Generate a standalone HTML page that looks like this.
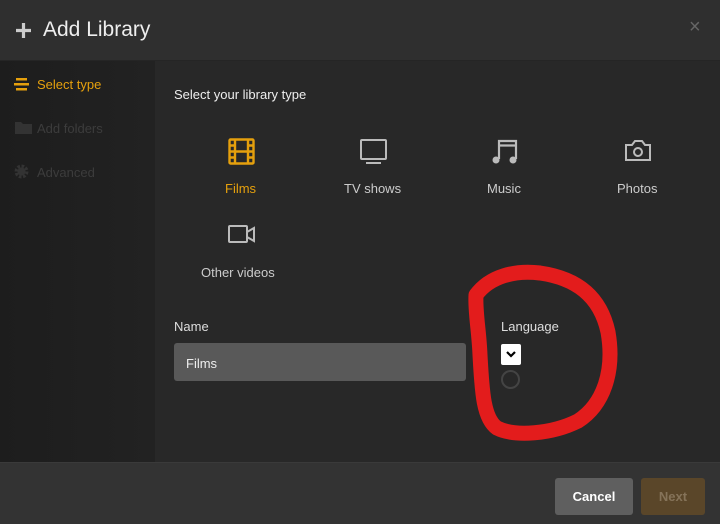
<!DOCTYPE html>
<html><head><style>
*{margin:0;padding:0;box-sizing:border-box}
body{width:720px;height:524px;background:#282828;font-family:"Liberation Sans",sans-serif;position:relative;overflow:hidden;color:#ddd}
.hdr{position:absolute;left:0;top:0;width:720px;height:61px;background:#2f2f2f;border-bottom:1px solid #252525}
.side{position:absolute;left:0;top:61px;width:155px;height:401px;background:linear-gradient(90deg,#1d1d1d,#222)}
.foot{position:absolute;left:0;top:462px;width:720px;height:62px;background:#333;border-top:1px solid #3a3a3a}
.t{position:absolute;white-space:nowrap}
.ic{position:absolute}
</style></head><body>
<div class="hdr"></div>
<div class="side"></div>
<div class="foot"></div>
<svg class="ic" style="left:15px;top:22px" width="17" height="17"><path d="M8.5 1v15M1 8.5h15" stroke="#ccc" stroke-width="3.2"/></svg>
<div class="t" style="left:43px;top:18px;font-size:21px;color:#eee">Add Library</div>
<div class="t" style="left:689px;top:16px;font-size:20px;color:#666">×</div>

<svg class="ic" style="left:14px;top:78px" width="16" height="14"><g fill="#e5a00d"><rect x="2" y="0" width="11" height="2.5"/><rect x="0" y="5" width="15" height="2.5"/><rect x="2" y="10" width="11" height="2.5"/></g></svg>
<div class="t" style="left:37px;top:77px;font-size:13px;color:#e5a00d">Select type</div>
<svg class="ic" style="left:15px;top:121px" width="17" height="13"><path d="M0 1h6l2 2h9v10H0z" fill="#333"/></svg>
<div class="t" style="left:37px;top:121px;font-size:13px;color:#3c3c3c">Add folders</div>
<svg class="ic" style="left:14px;top:164px" width="15" height="15"><circle cx="7.5" cy="7.5" r="5" fill="none" stroke="#333" stroke-width="4" stroke-dasharray="2.5 1.4"/><circle cx="7.5" cy="7.5" r="4" fill="#333"/></svg>
<div class="t" style="left:37px;top:165px;font-size:13px;color:#3c3c3c">Advanced</div>

<div class="t" style="left:174px;top:87px;font-size:13px;color:#eee">Select your library type</div>

<svg class="ic" style="left:228px;top:138px" width="27" height="27" fill="none" stroke="#e5a00d" stroke-width="2.4"><rect x="1.5" y="1.5" width="24" height="24" rx="1"/><path d="M7 1.5v24M20 1.5v24M7 13.5h13M1.5 7.5h5M1.5 13.5h5M1.5 19.5h5M20 7.5h5M20 13.5h5M20 19.5h5"/></svg>
<div class="t" style="left:225px;top:181px;font-size:13px;color:#e5a00d">Films</div>

<svg class="ic" style="left:360px;top:139px" width="27" height="25" fill="none" stroke="#bbb" stroke-width="2"><rect x="1" y="1" width="25" height="19" rx="1"/><path d="M6 24h15"/></svg>
<div class="t" style="left:344px;top:181px;font-size:13px;color:#ccc">TV shows</div>

<svg class="ic" style="left:492px;top:138px" width="26" height="26"><path d="M7 21V3h17v18M7 7.5h17" fill="none" stroke="#bbb" stroke-width="2.2"/><circle cx="4" cy="22" r="3.5" fill="#bbb"/><circle cx="21" cy="22" r="3.5" fill="#bbb"/></svg>
<div class="t" style="left:487px;top:181px;font-size:13px;color:#ccc">Music</div>

<svg class="ic" style="left:624px;top:138px" width="28" height="25" fill="none" stroke="#bbb" stroke-width="2"><path d="M2 7h6l3-4h7l3 4h5v15H2z"/><circle cx="14" cy="14" r="4"/></svg>
<div class="t" style="left:617px;top:181px;font-size:13px;color:#ccc">Photos</div>

<svg class="ic" style="left:228px;top:224px" width="28" height="21" fill="none" stroke="#bbb" stroke-width="2"><rect x="1" y="2" width="18" height="16" rx="1"/><path d="M19 8l7-4v13l-7-4"/></svg>
<div class="t" style="left:201px;top:265px;font-size:13px;color:#ccc">Other videos</div>

<div class="t" style="left:174px;top:319px;font-size:13px;color:#ddd">Name</div>
<div style="position:absolute;left:174px;top:343px;width:292px;height:38px;background:#595959;border-radius:3px"></div>
<div class="t" style="left:186px;top:356px;font-size:13px;color:#eee">Films</div>

<div class="t" style="left:501px;top:319px;font-size:13px;color:#ddd">Language</div>
<div style="position:absolute;left:501px;top:344px;width:20px;height:21px;background:#fff;border-radius:2px"></div>
<svg class="ic" style="left:506px;top:351px" width="10" height="7"><path d="M1 1l4 4 4-4" fill="none" stroke="#000" stroke-width="2.2"/></svg>
<div style="position:absolute;left:501px;top:370px;width:19px;height:19px;border:2px solid #444;border-radius:50%"></div>

<svg class="ic" style="left:0;top:0" width="720" height="524"><path d="M476 295C490 276 515 270 540 273C575 278 600 295 608 332C615 372 603 405 578 421C552 434 515 437 497 428C483 418 482 390 480 355C479 330 475 312 476 295Z" fill="none" stroke="#e31c1c" stroke-width="15" stroke-linejoin="round"/></svg>

<div style="position:absolute;left:555px;top:478px;width:78px;height:37px;background:#5f5f5f;border-radius:3px;color:#fff;font-weight:bold;font-size:13px;text-align:center;line-height:37px">Cancel</div>
<div style="position:absolute;left:641px;top:478px;width:64px;height:37px;background:#5a4629;border-radius:3px;color:#857359;font-weight:bold;font-size:13px;text-align:center;line-height:37px">Next</div>
</body></html>
